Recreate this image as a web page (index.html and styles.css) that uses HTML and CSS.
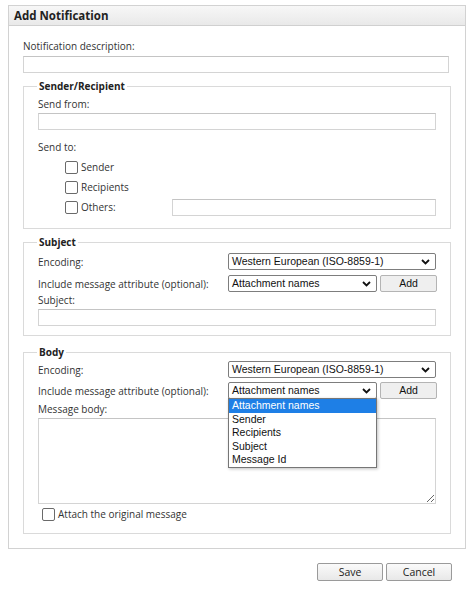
FILE: index.html
```html
<!DOCTYPE html>
<html>
<head>
<meta charset="utf-8">
<link rel="stylesheet" href="styles.css">
</head>
<body>
<div class="panel">
  <div class="panel-header">Add Notification</div>
  <div class="panel-body">
    <div class="lbl">Notification description:</div>
    <div class="txt"></div>

    <fieldset class="group sender">
      <legend>Sender/Recipient</legend>
      <div class="lbl">Send from:</div>
      <div class="txt"></div>
      <div class="lbl sendto">Send to:</div>
      <div class="checks">
        <div class="chk-row"><span class="cb"></span><span>Sender</span></div>
        <div class="chk-row"><span class="cb"></span><span>Recipients</span></div>
        <div class="chk-row others"><span class="cb"></span><span class="others-lbl">Others:</span><div class="txt others-input"></div></div>
      </div>
    </fieldset>

    <fieldset class="group subject">
      <legend>Subject</legend>
      <div class="form-row">
        <div class="lbl">Encoding:</div>
        <div class="sel sel-wide"><span>Western European (ISO-8859-1)</span><svg class="chev" width="9" height="6" viewBox="0 0 9 6"><path d="M1 1 L4.5 4.5 L8 1" fill="none" stroke="#111" stroke-width="1.8"/></svg></div>
      </div>
      <div class="form-row">
        <div class="lbl">Include message attribute (optional):</div>
        <div class="sel-group">
          <div class="sel sel-narrow"><span>Attachment names</span><svg class="chev" width="9" height="6" viewBox="0 0 9 6"><path d="M1 1 L4.5 4.5 L8 1" fill="none" stroke="#111" stroke-width="1.8"/></svg></div>
          <div class="btn-add">Add</div>
        </div>
      </div>
      <div class="lbl subj-lbl">Subject:</div>
      <div class="txt"></div>
    </fieldset>

    <fieldset class="group body-group">
      <legend>Body</legend>
      <div class="form-row row-enc">
        <div class="lbl">Encoding:</div>
        <div class="sel sel-wide"><span>Western European (ISO-8859-1)</span><svg class="chev" width="9" height="6" viewBox="0 0 9 6"><path d="M1 1 L4.5 4.5 L8 1" fill="none" stroke="#111" stroke-width="1.8"/></svg></div>
      </div>
      <div class="form-row row-attr">
        <div class="lbl">Include message attribute (optional):</div>
        <div class="sel-group">
          <div class="sel sel-narrow open"><span>Attachment names</span><svg class="chev" width="9" height="6" viewBox="0 0 9 6"><path d="M1 1 L4.5 4.5 L8 1" fill="none" stroke="#111" stroke-width="1.8"/></svg>
            <ul class="dropdown">
              <li class="active">Attachment names</li>
              <li>Sender</li>
              <li>Recipients</li>
              <li>Subject</li>
              <li>Message Id</li>
            </ul>
          </div>
          <div class="btn-add">Add</div>
        </div>
      </div>
      <div class="lbl msg-lbl">Message body:</div>
      <textarea class="msg"></textarea>
      <div class="attach-row"><span class="cb"></span><span>Attach the original message</span></div>
    </fieldset>
  </div>
</div>
<div class="actions">
  <div class="btn">Save</div>
  <div class="btn">Cancel</div>
</div>
</body>
</html>
```

FILE: styles.css
```css
html, body {
  margin: 0;
  padding: 0;
  background: #ffffff;
}
body {
  padding-top: 5px;
  font-family: "Open Sans", "Noto Sans", sans-serif;
  font-size: 10px;
  color: #333333;
}
.panel {
  margin-left: 8px;
  width: 456px;
  border: 1px solid #d2d2d2;
}
.panel-header {
  height: 19px;
  line-height: 19px;
  padding-left: 5px;
  border-bottom: 1px solid #d0d0d0;
  background: linear-gradient(#f7f7f7, #e9e9e9);
  font-weight: 700;
  font-size: 11.5px;
  color: #222;
}
.panel-body {
  padding: 13px 14px 14px 14px;
}
.lbl {
  height: 14px;
  line-height: 14px;
  white-space: nowrap;
}
.txt {
  height: 15px;
  border: 1px solid #d4d4d4;
  border-top-color: #c4c4c4;
  background: #fff;
}
.panel-body > .lbl { margin-bottom: 3px; }
.panel-body > .txt { width: 424px; }

.group {
  margin: 6px 0 0 0;
  padding: 4px 14px 11px 14px;
  border: 1px solid #dadada;
  min-width: 0;
}
.group legend {
  padding: 0 2px;
  margin-left: -1px;
  height: 14px;
  line-height: 14px;
  font-weight: 700;
  font-size: 10px;
  color: #222;
}
.group .lbl { margin-bottom: 2px; }
.group .sendto { margin-top: 10px; margin-bottom: 0; }
.checks {
  margin-top: 3px;
  display: flex;
  flex-direction: column;
}
.chk-row {
  height: 20px;
  display: flex;
  align-items: center;
  padding-left: 27px;
}
.cb {
  display: inline-block;
  width: 11px;
  height: 11px;
  border: 1px solid #6a6a6a;
  border-radius: 2px;
  background: #fff;
  margin-right: 3px;
  flex: none;
}
.others-lbl { width: 91px; }
.others-input { flex: 1; }

.subject { margin-top: 6px; padding-bottom: 9px; }
.form-row {
  display: grid;
  grid-template-columns: 190px 1fr;
  align-items: center;
  height: 17px;
  margin-bottom: 5px;
}
.form-row .lbl { margin-bottom: 0; }
.sel {
  position: relative;
  box-sizing: border-box;
  height: 17px;
  border: 1px solid #7d7d7d;
  border-radius: 2px;
  background: #fff;
  font-family: "Liberation Sans", Arial, sans-serif;
  font-size: 10.5px;
  color: #111;
  line-height: 15px;
  padding-left: 3px;
  white-space: nowrap;
}
.chev {
  position: absolute;
  right: 5px;
  top: 5px;
}
.sel-group {
  display: flex;
  gap: 3px;
}
.sel-narrow { width: 149px; }
.btn-add {
  box-sizing: border-box;
  width: 57px;
  height: 17px;
  border: 1px solid #b4b4b4;
  border-radius: 2px;
  background: #efefef;
  font-family: "Liberation Sans", Arial, sans-serif;
  font-size: 10.5px;
  color: #111;
  text-align: center;
  line-height: 15px;
}
.subj-lbl { margin-top: -4px; }

.body-group { margin-top: 9px; padding-top: 2px; padding-bottom: 11px; }
.body-group .row-enc { margin-bottom: 4px; }
.body-group .row-attr { margin-bottom: 3px; }
.msg-lbl { margin-top: 0; }
.msg {
  display: block;
  box-sizing: border-box;
  width: 100%;
  height: 86px;
  margin: 0;
  border: 1px solid #d4d4d4;
  border-top-color: #c4c4c4;
  resize: both;
  background: #fff;
}
.attach-row {
  margin-top: 2px;
  height: 16px;
  display: flex;
  align-items: center;
  padding-left: 4px;
}

.dropdown {
  position: absolute;
  left: -1px;
  top: 15px;
  width: 147px;
  margin: 0;
  padding: 0;
  list-style: none;
  background: #fff;
  border: 1px solid #767676;
  box-shadow: 1px 1px 3px rgba(0,0,0,0.25);
  z-index: 5;
}
.dropdown li {
  height: 13.5px;
  line-height: 13.5px;
  padding-left: 3px;
  font-size: 10.5px;
  color: #111;
}
.dropdown li.active {
  background: #1e7fe6;
  color: #fff;
}

.actions {
  display: flex;
  justify-content: flex-end;
  gap: 3px;
  margin-top: 14px;
  margin-right: 22px;
}
.btn {
  box-sizing: border-box;
  width: 66px;
  height: 18px;
  border: 1px solid #9a9a9a;
  border-radius: 2px;
  background: linear-gradient(#fafafa, #e8e8e8);
  text-align: center;
  line-height: 16px;
  font-size: 10.5px;
  color: #222;
}
```
